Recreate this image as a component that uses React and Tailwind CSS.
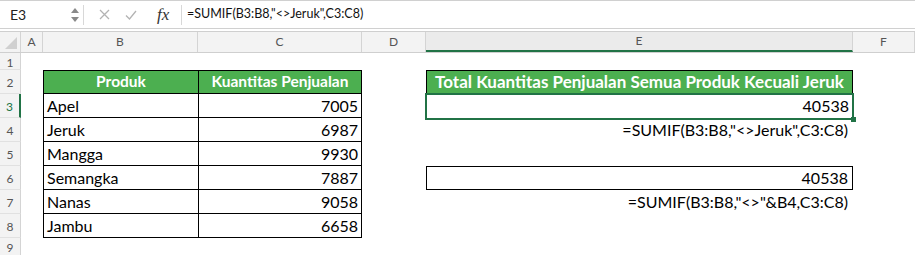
const cols = [
  { key: "A", w: "w-[22px]" },
  { key: "B", w: "w-[155px]" },
  { key: "C", w: "w-[164px]" },
  { key: "D", w: "w-[64px]" },
  { key: "E", w: "w-[427px]" },
  { key: "F", w: "w-[62px]" },
];

const products = [
  ["Apel", "7005"],
  ["Jeruk", "6987"],
  ["Mangga", "9930"],
  ["Semangka", "7887"],
  ["Nanas", "9058"],
  ["Jambu", "6658"],
];

const font = { fontFamily: "Lato, 'Open Sans', sans-serif" };

function RowHead({ n, h, active }) {
  return (
    <div
      className={`flex w-[21px] shrink-0 items-center justify-center border-b border-[#e1e1e1] bg-[#f3f3f3] text-[12px] ${h} ${
        active ? "border-r-2 border-r-[#217346] text-[#217346]" : "border-r border-r-[#d4d4d4] text-[#555]"
      }`}
    >
      <span className="pt-[3px]">{n}</span>
    </div>
  );
}

function FormulaBar() {
  return (
    <div className="flex h-[29px] items-center border-t border-b border-[#d0d0d0] bg-white">
      <div className="flex h-full w-[83px] items-center justify-between pl-[10px] pr-[3px]">
        <span className="text-[14px] text-[#222]">E3</span>
        <div className="flex flex-col gap-[4px] pr-[1px]">
          <svg width="8" height="5" viewBox="0 0 8 5"><path d="M0 5 L4 0 L8 5 Z" fill="#8a8a8a" /></svg>
          <svg width="8" height="5" viewBox="0 0 8 5"><path d="M0 0 L4 5 L8 0 Z" fill="#8a8a8a" /></svg>
        </div>
      </div>
      <div className="h-[20px] w-px bg-[#d8d8d8]" />
      <div className="flex h-full w-[97px] items-center">
        <svg className="ml-[15px]" width="11" height="11" viewBox="0 0 11 11">
          <path d="M1 1 L10 10 M10 1 L1 10" stroke="#b3b3b3" strokeWidth="1.3" />
        </svg>
        <svg className="ml-[15px]" width="12" height="10" viewBox="0 0 12 10">
          <path d="M1 5.5 L4.5 9 L11 1" stroke="#b3b3b3" strokeWidth="1.3" fill="none" />
        </svg>
        <span
          className="ml-[20px] text-[17px] italic text-[#333]"
          style={{ fontFamily: "'Liberation Serif', serif" }}
        >
          fx
        </span>
      </div>
      <div className="h-[20px] w-px bg-[#d8d8d8]" />
      <span className="ml-[5px] text-[12.5px] text-[#111]">=SUMIF(B3:B8,"&lt;&gt;Jeruk",C3:C8)</span>
    </div>
  );
}

function ColHeaders() {
  return (
    <div className="mt-[2px] flex h-[22px] border-t border-b border-[#cfcfcf] bg-[#f3f3f3]">
      <div className="relative w-[21px] shrink-0 border-r border-[#d4d4d4]">
        <svg className="absolute bottom-[3px] right-[3px]" width="12" height="12" viewBox="0 0 12 12">
          <path d="M12 0 L12 12 L0 12 Z" fill="#d0d0d0" />
        </svg>
      </div>
      {cols.map((c) => (
        <div
          key={c.key}
          className={`flex shrink-0 items-center justify-center border-r border-[#d4d4d4] text-[12px] text-[#555] ${c.w} ${
            c.key === "E" ? "border-b-2 border-b-[#217346] bg-[#ebebeb]" : ""
          }`}
        >
          {c.key}
        </div>
      ))}
    </div>
  );
}

function Row({ n, h = "h-[24px]", active, children }) {
  return (
    <div className="flex">
      <RowHead n={n} h={h} active={active} />
      {children}
    </div>
  );
}

export default function App() {
  const rightCells = {
    2: (
      <div className="flex h-[24px] w-[427px] items-center justify-center border border-black bg-[#4caf50] text-[17px] font-bold text-white">
        Total Kuantitas Penjualan Semua Produk Kecuali Jeruk
      </div>
    ),
    3: (
      <div className="relative flex h-[24px] w-[427px] items-center justify-end pr-[4px] text-[16px]">
        40538
        <div className="absolute -top-px -left-px -right-px bottom-[-2px] border-2 border-[#217346]" />
        <div className="absolute -bottom-[4px] -right-[3px] h-[5px] w-[5px] bg-[#217346]" />
      </div>
    ),
    4: (
      <div className="flex h-[24px] w-[427px] items-center justify-end pr-[5px] text-[16px]">
        =SUMIF(B3:B8,"&lt;&gt;Jeruk",C3:C8)
      </div>
    ),
    6: (
      <div className="flex h-[24px] w-[427px] items-center justify-end border border-black pr-[4px] text-[16px]">
        40538
      </div>
    ),
    7: (
      <div className="flex h-[24px] w-[427px] items-center justify-end pr-[5px] text-[16px]">
        =SUMIF(B3:B8,"&lt;&gt;"&amp;B4,C3:C8)
      </div>
    ),
  };

  return (
    <div className="h-[255px] w-[915px] overflow-hidden bg-white text-black" style={font}>
      <FormulaBar />
      <ColHeaders />
      <Row n={1} h="h-[17px]" />
      <Row n={2}>
        <div className="w-[22px]" />
        <div className="flex h-[24px] w-[155px] items-center justify-center border-t border-l border-b border-black bg-[#4caf50] text-[15.5px] font-bold text-white">
          Produk
        </div>
        <div className="flex h-[24px] w-[164px] items-center justify-center border border-black bg-[#4caf50] text-[15.5px] font-bold text-white">
          Kuantitas Penjualan
        </div>
        <div className="w-[64px]" />
        {rightCells[2]}
      </Row>
      {products.map(([name, qty], i) => (
        <Row key={name} n={i + 3} active={i === 0}>
          <div className={`w-[22px] ${i === 0 ? "-ml-px w-[23px]" : ""}`} />
          <div className="flex h-[24px] w-[155px] items-center border-l border-b border-black pl-[3px] text-[16px]">
            {name}
          </div>
          <div className="flex h-[24px] w-[164px] items-center justify-end border-l border-r border-b border-black pr-[3px] text-[16px]">
            {qty}
          </div>
          <div className="w-[64px]" />
          {rightCells[i + 3] || <div className="w-[427px]" />}
        </Row>
      ))}
      <Row n={9} h="h-[18px]" />
    </div>
  );
}
